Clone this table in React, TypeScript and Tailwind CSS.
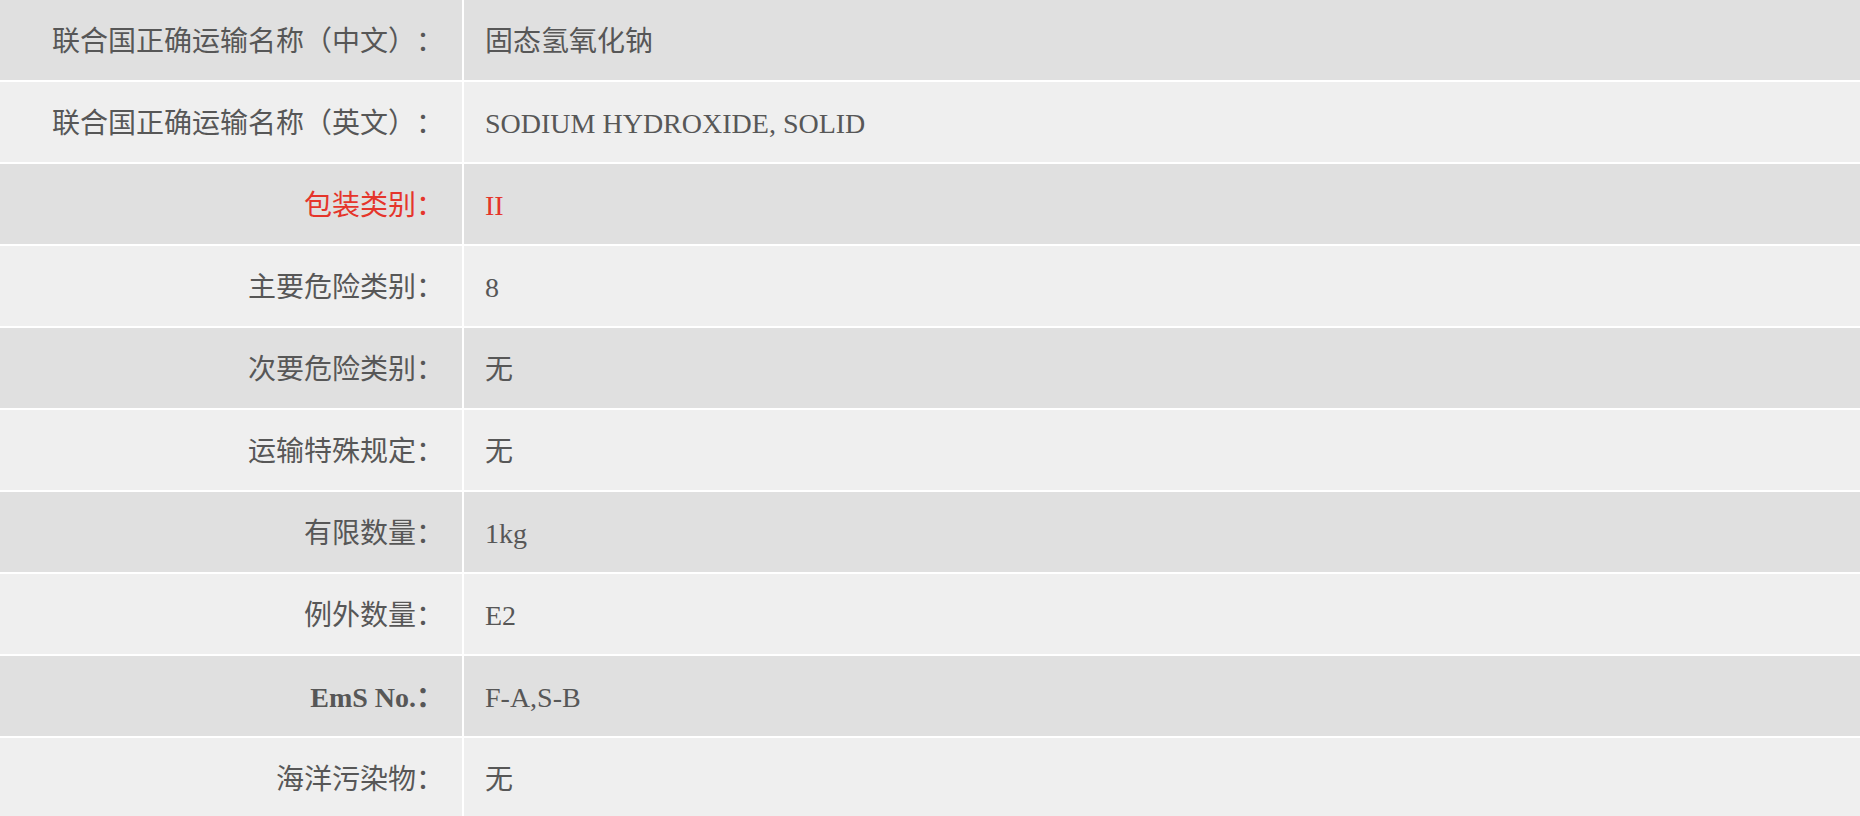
const rows: { label: string; value: string; red?: boolean; bold?: boolean }[] = [
  { label: '联合国正确运输名称（中文）：', value: '固态氢氧化钠' },
  { label: '联合国正确运输名称（英文）：', value: 'SODIUM HYDROXIDE, SOLID' },
  { label: '包装类别：', value: 'II', red: true },
  { label: '主要危险类别：', value: '8' },
  { label: '次要危险类别：', value: '无' },
  { label: '运输特殊规定：', value: '无' },
  { label: '有限数量：', value: '1kg' },
  { label: '例外数量：', value: 'E2' },
  { label: 'EmS No.：', value: 'F-A,S-B', bold: true },
  { label: '海洋污染物：', value: '无' },
];

export default function App() {
  return (
    <div className="w-[1860px] h-[816px] overflow-hidden bg-white font-['Liberation_Serif','Noto_Sans_CJK_SC',serif] text-[28px] text-[#575757] [text-spacing-trim:space-all]">
      {rows.map((row, i) => (
        <div
          key={i}
          className={`flex h-[82px] border-b-2 border-white ${i % 2 === 0 ? 'bg-[#e0e0e0]' : 'bg-[#efefef]'}`}
        >
          <div
            className={`w-[464px] shrink-0 flex items-center justify-end pr-[18px] pt-[3px] border-r-2 border-white ${row.red ? 'text-[#e5352b]' : ''} ${row.bold ? 'font-bold' : ''}`}
          >
            {row.label}
          </div>
          <div className={`flex-1 flex items-center pl-[21px] pt-[3px] ${row.red ? 'text-[#e5352b]' : ''}`}>
            {row.value}
          </div>
        </div>
      ))}
    </div>
  );
}
